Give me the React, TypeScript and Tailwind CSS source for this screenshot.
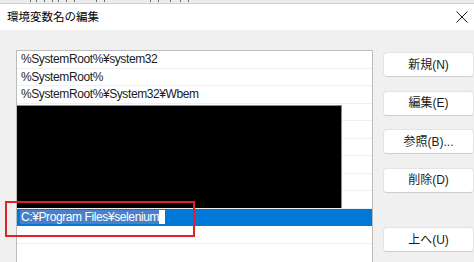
import React from 'react';

const rows = [
  '%SystemRoot%¥system32',
  '%SystemRoot%',
  '%SystemRoot%¥System32¥Wbem',
  '',
  '',
  '',
  '',
  '',
  '',
];

const buttons = ['新規(N)', '編集(E)', '参照(B)...', '削除(D)'];

// bits of the window behind, only the feet of its letters peek out
const behindMarks = [30, 36, 44, 52, 58, 66, 74, 96, 104, 150, 158, 170, 180, 188];

const DialogButton = ({ label, className = '' }: { label: string; className?: string }) => (
  <div
    className={`h-[25px] w-[91px] bg-white border border-[#e3e3e3] border-b-[#cdcdcd] rounded-[4px] flex items-center justify-center text-[12px] text-[#1b1b1b] font-['Liberation_Sans','Noto_Sans_CJK_JP',sans-serif] ${className}`}
  >
    {label}
  </div>
);

const App: React.FC = () => {
  return (
    <div className="w-[474px] h-[262px] overflow-hidden relative bg-[#f0f0f0] font-['Liberation_Sans','Noto_Sans_CJK_JP',sans-serif]">
      <div className="h-[4px] bg-[#ececec] border-b border-[#cfcfcf] flex items-start">
        {behindMarks.map((x, i) => (
          <div
            key={i}
            className="absolute top-0 w-[1px] h-[2px] bg-[#6a6a6a]"
            style={{ left: x }}
          />
        ))}
      </div>

      {/* title bar */}
      <div className="h-[26px] bg-white flex items-center justify-between pl-[7px] pr-[6px]">
        <span className="text-[11.5px] text-black font-['Noto_Sans_CJK_JP',sans-serif]">環境変数名の編集</span>
        <svg width="12" height="12" viewBox="0 0 12 12">
          <line x1="0.5" y1="0.5" x2="11.5" y2="11.5" stroke="#1a1a1a" strokeWidth="1" />
          <line x1="11.5" y1="0.5" x2="0.5" y2="11.5" stroke="#1a1a1a" strokeWidth="1" />
        </svg>
      </div>

      {/* body */}
      <div className="flex pt-[20px] pl-[16px] gap-[10px]">
        <div className="w-[357px] h-[240px] shrink-0 border border-[#bcbcbc] bg-white relative">
          {rows.map((text, i) => (
            <div
              key={i}
              className="h-[17.5px] border-b border-[#f0f0f0] flex items-center pl-[4px] text-[12px] tracking-[-0.4px] text-[#1b1b1b] whitespace-nowrap"
            >
              {text}
            </div>
          ))}
          <div className="h-[17.5px] bg-[#0078d7] flex items-center pl-[3px]">
            <div className="h-[14px] bg-white flex items-center pr-[6px]">
              <span className="h-[14px] bg-[#4a80c8] text-white text-[12px] tracking-[-0.4px] leading-[14px] pl-[1px] whitespace-nowrap">
                C:¥Program Files¥selenium
              </span>
            </div>
          </div>
          <div className="h-[17.5px] border-b border-[#f0f0f0]" />

          {/* redaction box */}
          <div className="absolute left-0 top-[54px] w-[325px] h-[103px] bg-black border-t border-r border-[#8a8a8a]" />
        </div>

        <div className="flex flex-col pt-[2px] gap-[13.5px]">
          {buttons.map((b) => (
            <DialogButton key={b} label={b} />
          ))}
          <DialogButton label="上へ(U)" className="mt-[21px]" />
        </div>
      </div>

      {/* red annotation */}
      <div className="absolute left-[5px] top-[201px] w-[190px] h-[36px] border-2 border-[#e0202a]" />
    </div>
  );
};

export default App;
